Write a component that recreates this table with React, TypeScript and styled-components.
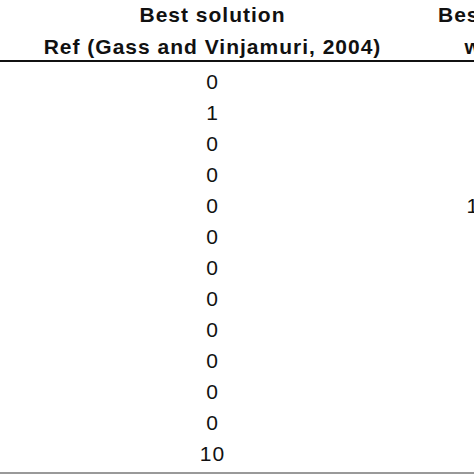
import styled, { createGlobalStyle } from 'styled-components';

type Column = {
  title: string;
  subtitle: string;
};

const columns: Column[] = [
  { title: 'Best solution', subtitle: 'Ref (Gass and Vinjamuri, 2004)' },
  { title: 'Best solution', subtitle: 'with MIP' },
];

const rows: [string, string][] = [
  ['0', ''],
  ['1', ''],
  ['0', ''],
  ['0', ''],
  ['0', '1000000'],
  ['0', ''],
  ['0', ''],
  ['0', ''],
  ['0', ''],
  ['0', ''],
  ['0', ''],
  ['0', ''],
  ['10', ''],
];

const GlobalStyle = createGlobalStyle`
  html, body {
    margin: 0;
    padding: 0;
    background: #ffffff;
  }

  body {
    font-family: "Liberation Sans", Arial, Helvetica, sans-serif;
    color: #111111;
  }
`;

export default function App() {
  return (
    <>
      <GlobalStyle />
      <Page>
        <Table>
          <colgroup>
            <col style={{ width: 425 }} />
            <col style={{ width: 172 }} />
          </colgroup>
          <thead>
            <tr>
              {columns.map((col, i) => (
                <HeadCell key={i}>
                  <Title>{col.title}</Title>
                  <Subtitle>{col.subtitle}</Subtitle>
                </HeadCell>
              ))}
            </tr>
          </thead>
          <tbody>
            <SpacerRow>
              <td colSpan={2} />
            </SpacerRow>
            {rows.map((row, i) => (
              <tr key={i}>
                <Cell>{row[0]}</Cell>
                <Cell>{row[1]}</Cell>
              </tr>
            ))}
          </tbody>
        </Table>
        <BottomEdge />
      </Page>
    </>
  );
}

const Page = styled.div`
  width: 474px;
  height: 474px;
  overflow: hidden;
  display: flex;
  flex-direction: column;
`;

const Table = styled.table`
  border-collapse: collapse;
  table-layout: fixed;
  width: 597px;
  flex: 0 0 auto;
`;

const HeadCell = styled.th`
  padding: 1px 0 0;
  border-bottom: 2px solid #111111;
  text-align: center;
  font-size: 21px;
  font-weight: bold;
  letter-spacing: 1px;
  white-space: nowrap;
  vertical-align: top;
`;

const Title = styled.div`
  line-height: 27px;
  margin-bottom: 6px;
`;

const Subtitle = styled.div`
  line-height: 26px;
`;

const SpacerRow = styled.tr`
  height: 5px;

  td {
    padding: 0;
  }
`;

const Cell = styled.td`
  padding: 0;
  height: 31px;
  line-height: 31px;
  text-align: center;
  font-size: 21px;
  letter-spacing: 1px;
  white-space: nowrap;
`;

const BottomEdge = styled.div`
  margin-top: auto;
  height: 2px;
  background: #999999;
`;
